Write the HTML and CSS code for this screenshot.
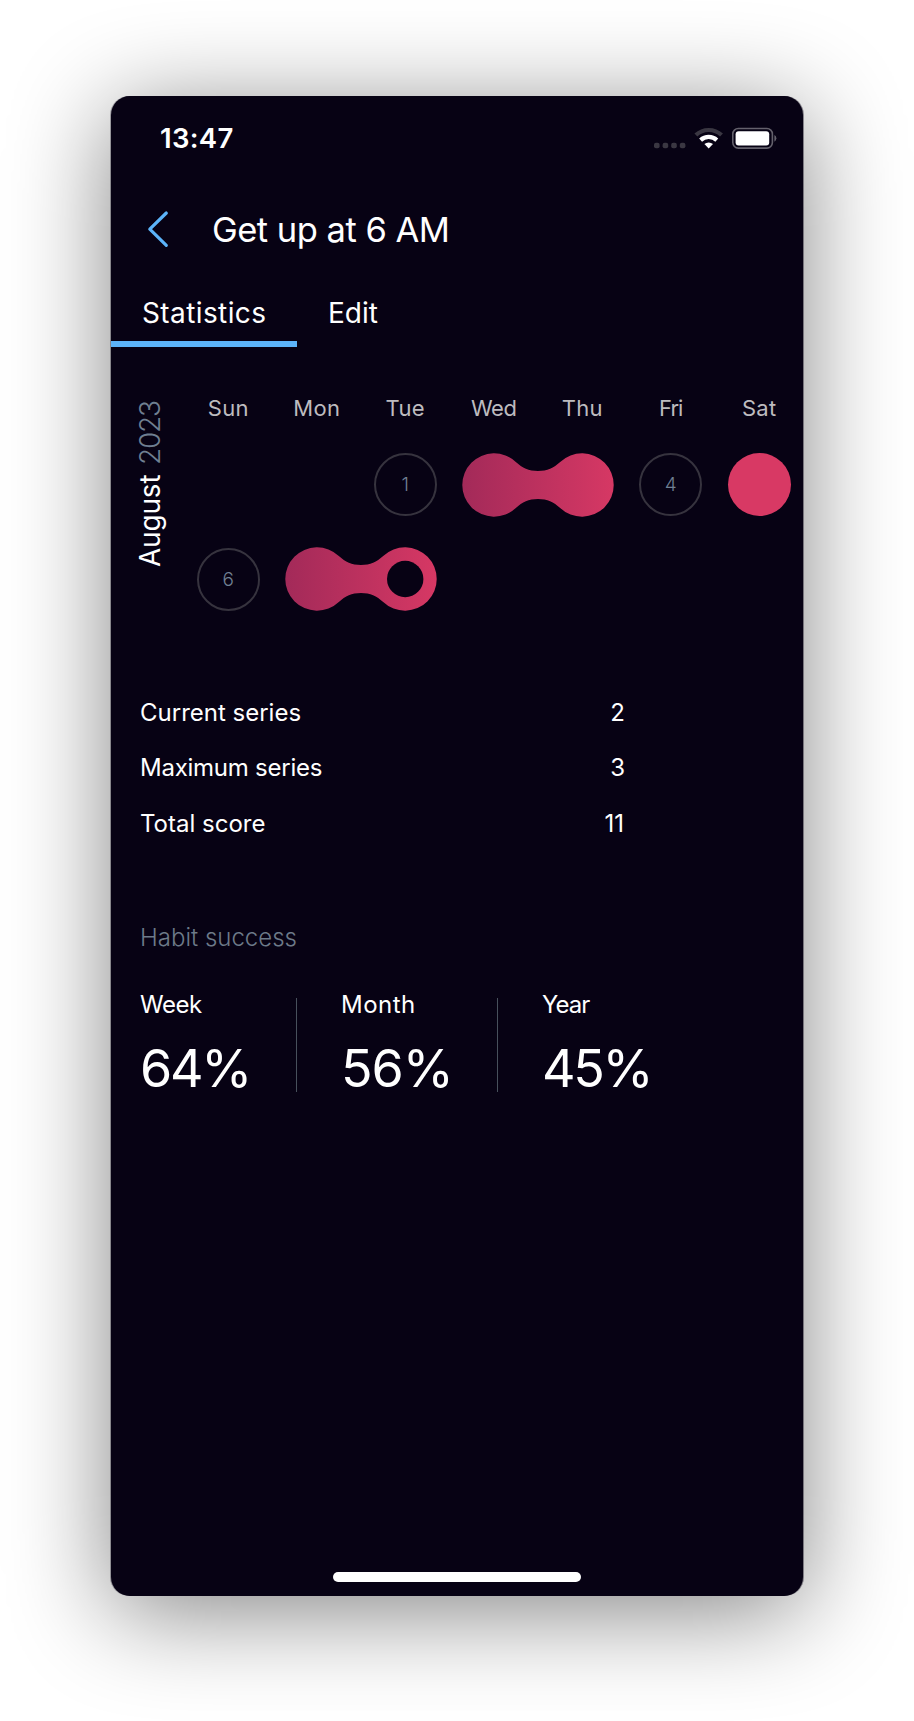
FILE: index.html
```
<!DOCTYPE html>
<html lang="en">
<head>
<meta charset="utf-8">
<title>Get up at 6 AM</title>
<link rel="stylesheet" href="styles.css">
</head>
<body>
  <div class="phone">
    <div class="status-bar">
      <span class="time">13:47</span>
      <svg class="status-icons" width="130" height="26" viewBox="650 125 130 26" fill="none">
        <g fill="#3a3742">
          <rect x="654" y="142.7" width="5.6" height="5.6" rx="2"/>
          <rect x="662.6" y="142.7" width="5.6" height="5.6" rx="2"/>
          <rect x="671.2" y="142.7" width="5.6" height="5.6" rx="2"/>
          <rect x="679.8" y="142.7" width="5.6" height="5.6" rx="2"/>
        </g>
        <path d="M695.9 135.1A18.6 18.6 0 0 1 721.5 135.1" stroke="#3a3742" stroke-width="4.2"/>
        <path d="M700.6 140.1A11.9 11.9 0 0 1 716.8 140.1" stroke="#fff" stroke-width="4.2"/>
        <path d="M704.4 144A6.6 6.6 0 0 1 713 144L708.7 148.5Z" fill="#fff"/>
        <rect x="732.8" y="128.5" width="39.6" height="19.6" rx="5.5" stroke="#64616c" stroke-width="1.6"/>
        <rect x="735.6" y="131.2" width="33.6" height="14.2" rx="3" fill="#fff"/>
        <path d="M774.4 135A3.8 3.8 0 0 1 774.4 141.7Z" fill="#64616c"/>
      </svg>
    </div>

    <div class="header">
      <svg class="back" width="24" height="40" viewBox="0 0 24 40" fill="none" stroke="#5cb4fa" stroke-width="3.2" stroke-linecap="round" stroke-linejoin="round">
        <path d="M20.3 4L3.8 20.2L20.3 36.3"/>
      </svg>
      <h1>Get up at 6 AM</h1>
    </div>

    <div class="tabs">
      <div class="tab active">Statistics</div>
      <div class="tab">Edit</div>
    </div>

    <div class="calendar">
      <div class="month">
        <span>August</span>
        <span class="year">2023</span>
      </div>
      <div class="days">
        <div class="week names">
          <span>Sun</span>
          <span>Mon</span>
          <span>Tue</span>
          <span class="wed">Wed</span>
          <span>Thu</span>
          <span class="fri">Fri</span>
          <span>Sat</span>
        </div>
        <div class="week">
          <span></span>
          <span></span>
          <span class="day">1</span>
          <svg class="series" width="152" height="64" viewBox="0 0 152 64">
            <defs>
              <linearGradient id="pink">
                <stop offset="0" stop-color="#a32a59"/>
                <stop offset="1" stop-color="#d63864"/>
              </linearGradient>
            </defs>
            <path fill="url(#pink)" d="M53.8 9A31.7 31.7 0 1 0 53.8 55C60.5 49 66.5 46 76 46C85.5 46 91.5 49 98.2 55A31.7 31.7 0 1 0 98.2 9C91.5 15 85.5 18 76 18C66.5 18 60.5 15 53.8 9Z"/>
          </svg>
          <span class="day">4</span>
          <span class="day done"></span>
        </div>
        <div class="week">
          <span class="day">6</span>
          <svg class="series" width="152" height="64" viewBox="0 0 152 64">
            <path fill="url(#pink)" d="M53.8 9A31.7 31.7 0 1 0 53.8 55C60.5 49 66.5 46 76 46C85.5 46 91.5 49 98.2 55A31.7 31.7 0 1 0 98.2 9C91.5 15 85.5 18 76 18C66.5 18 60.5 15 53.8 9Z"/>
            <circle cx="120.2" cy="32" r="18.2" fill="#070214"/>
          </svg>
        </div>
      </div>
    </div>

    <div class="totals">
      <div class="row"><span>Current series</span><span>2</span></div>
      <div class="row"><span class="max">Maximum series</span><span>3</span></div>
      <div class="row"><span>Total score</span><span class="score">11</span></div>
    </div>

    <div class="success">
      <h2>Habit success</h2>
      <div class="percents">
        <div class="percent">
          <div class="label week-label">Week</div>
          <div class="value">64%</div>
        </div>
        <div class="line"></div>
        <div class="percent">
          <div class="label month-label">Month</div>
          <div class="value wide">56%</div>
        </div>
        <div class="line"></div>
        <div class="percent">
          <div class="label year-label">Year</div>
          <div class="value">45%</div>
        </div>
      </div>
    </div>

    <div class="home"></div>
  </div>
</body>
</html>
```
FILE: styles.css
```
body {
  margin: 0;
  background: #fff;
  font-family: Inter, sans-serif;
  color: #fff;
}

.phone {
  display: flex;
  flex-direction: column;
  width: 692px;
  height: 1500px;
  margin: 96px 0 125px 111px;
  overflow: hidden;
  border-radius: 19px;
  background: #070214;
  box-shadow: 1px 0 0 rgba(7, 2, 20, 0.4), -1px 0 0 rgba(7, 2, 20, 0.3), 0 15px 100px rgba(0, 0, 0, 0.49);
  box-sizing: border-box;
}

h1, h2 {
  margin: 0;
  font-weight: 400;
}

/* status bar */
.status-bar {
  display: flex;
  justify-content: space-between;
  height: 85px;
  padding: 0 23px 0 49px;
}

.time {
  font-size: 27.5px;
  font-weight: 600;
  line-height: 85px;
  letter-spacing: 0.3px;
}

.status-icons {
  margin-top: 29px;
}

/* title */
.header {
  display: flex;
  align-items: center;
  height: 96px;
  padding-left: 35px;
}

.header h1 {
  margin-left: 42px;
  font-size: 34.5px;
  letter-spacing: -0.5px;
}

/* tabs */
.tabs {
  display: flex;
}

.tab {
  padding: 8px 31px 0;
  border-bottom: 6px solid transparent;
  font-size: 28px;
  line-height: 56px;
}

.tab.active {
  width: 124px;
  border-color: #5cb4fa;
  letter-spacing: 0.4px;
}

/* calendar */
.calendar {
  display: flex;
  padding-top: 39px;
}

.month {
  display: flex;
  gap: 10px;
  width: 73px;
  height: 181px;
  writing-mode: vertical-rl;
  transform: rotate(180deg);
  font-size: 28px;
  line-height: 79px;
  letter-spacing: -0.2px;
}

.year {
  color: #6f7f91;
  font-weight: 300;
  letter-spacing: -1.2px;
}

.week {
  display: grid;
  grid-template-columns: repeat(7, 88.5px);
  align-items: center;
  justify-items: center;
  height: 94.6px;
}

.names {
  height: 44px;
  margin-bottom: 7.4px;
  color: #bdbbbf;
  font-size: 22px;
  letter-spacing: 0.3px;
}

.wed {
  letter-spacing: -0.4px;
}

.fri {
  letter-spacing: -0.9px;
}

.day {
  width: 63px;
  height: 63px;
  box-sizing: border-box;
  border: 2px solid #36333e;
  border-radius: 50%;
  color: #708093;
  font-size: 19px;
  font-weight: 300;
  line-height: 60px;
  text-align: center;
}

.done {
  border: none;
  background: #d83964;
}

.series {
  grid-column: span 2;
}

/* totals */
.totals {
  width: 485px;
  margin: 58.4px 0 0 29px;
  font-size: 24px;
}

.row {
  display: flex;
  justify-content: space-between;
  line-height: 55.4px;
}

.max {
  letter-spacing: -0.25px;
}

.score {
  margin-right: 1px;
}

/* success */
.success {
  margin: 67px 0 0 29px;
}

.success h2 {
  color: #6d7a89;
  font-size: 24px;
  font-weight: 300;
  line-height: 40px;
}

.percents {
  display: flex;
  margin-top: 30px;
}

.percent {
  width: 156px;
}

.label {
  font-size: 24px;
  line-height: 34px;
}

.week-label {
  letter-spacing: -0.5px;
}

.month-label {
  letter-spacing: 0.5px;
}

.year-label {
  letter-spacing: -1px;
}

.value {
  margin-top: 20px;
  font-size: 52px;
  line-height: 53px;
  letter-spacing: -2.3px;
}

.value.wide {
  letter-spacing: -1px;
}

.line {
  width: 1px;
  height: 94px;
  margin: 10px 44px 0 0;
  background: #47505c;
}

.home {
  width: 248px;
  height: 10px;
  margin: auto auto 14px 222px;
  border-radius: 5px;
  background: #fff;
}
```
